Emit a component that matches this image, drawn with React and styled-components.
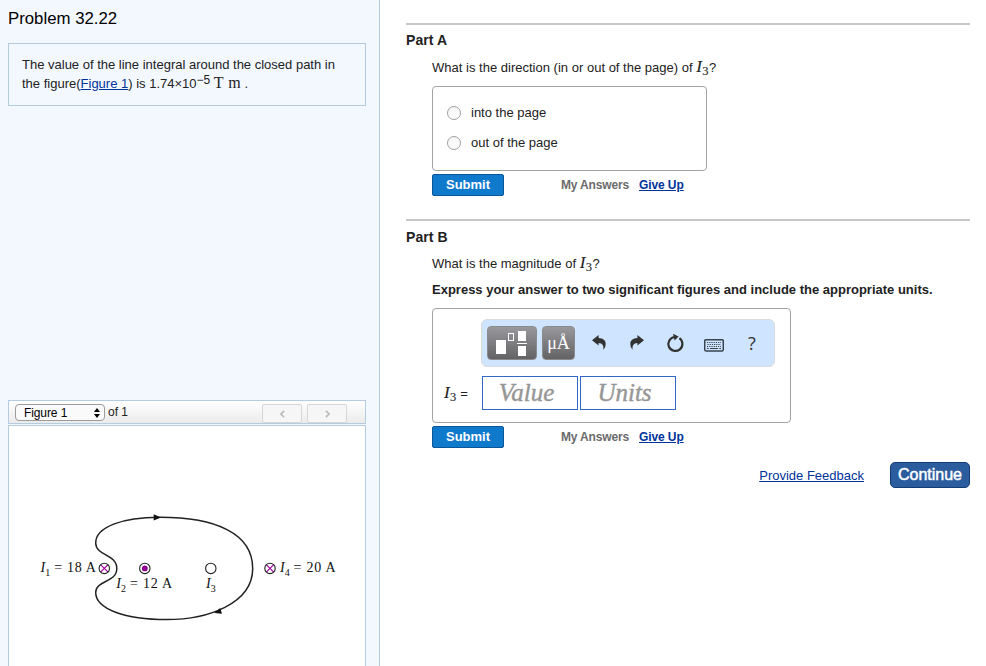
import React from "react";
import styled, { createGlobalStyle } from "styled-components";

const GlobalStyle = createGlobalStyle`
	* {
		box-sizing: border-box;
	}
	body {
		margin: 0;
		background-color: #fff;
		color: #222;
		font-family: "Liberation Sans", Arial, sans-serif;
		font-size: 13px;
	}
`;

const Container = styled.div`
	display: flex;
	height: 666px;
	overflow: hidden;
`;

const Left = styled.div`
	display: flex;
	flex-direction: column;
	flex: 0 0 380px;
	padding: 9px 13px 0 8px;
	background-color: #f3f8ff;
	border-right: 1px solid #b9cde0;
`;

const Right = styled.div`
	flex: 1;
	padding: 23px 16px 0 26px;
`;

const Title = styled.h1`
	margin: 0 0 14px;
	color: #000;
	font-size: 16.8px;
	font-weight: 400;
	line-height: 20px;
`;

const Intro = styled.div`
	height: 63px;
	padding: 11px 13px;
	border: 1px solid #b5cbdc;
	line-height: 19px;
	white-space: nowrap;
	& sup {
		font-size: 12px;
		line-height: 0;
		vertical-align: 4px;
	}
`;

const Anchor = styled.a`
	color: #039;
	text-decoration: underline;
	font-size: ${(props) => props.$size || "13px"};
	font-weight: ${(props) => (props.$bold ? 700 : 400)};
	letter-spacing: ${(props) => (props.$bold ? "-0.1px" : 0)};
`;

const Serif = styled.span`
	font-family: "Liberation Serif", "Times New Roman", serif;
	font-size: 16px;
	line-height: 0;
	letter-spacing: 0.4px;
`;

const Symbol = styled(Serif)`
	font-style: italic;
	font-size: 17px;
	-webkit-text-stroke: 0.1px #222;
	& sub {
		font-style: normal;
		font-size: 12.5px;
		line-height: 0;
		vertical-align: -3px;
	}
`;

const FigureBar = styled.div`
	display: flex;
	align-items: flex-start;
	height: 24px;
	margin-top: auto;
	padding: 2px 18px 0 6px;
	border: 1px solid #b5cbe0;
	background: linear-gradient(#fff, #ebebeb);
`;

const Picker = styled.div`
	display: flex;
	align-items: center;
	justify-content: space-between;
	width: 90px;
	height: 17px;
	margin: 1px 3px 0 0;
	padding: 0 4px 0 8px;
	border: 1px solid #9c9c9c;
	border-radius: 4px;
	background-color: #fafafa;
	color: #000;
	font-size: 12px;
	line-height: 14px;
	letter-spacing: -0.1px;
`;

const Count = styled.span`
	flex: 1;
	font-size: 12px;
	line-height: 18px;
`;

const Pager = styled.div`
	display: flex;
	align-items: center;
	justify-content: center;
	width: 40px;
	height: 19px;
	margin: 1px 0 0 5px;
	border: 1px solid #d6d6d6;
	border-radius: 2px;
	background-color: #f6f6f6;
`;

const FigureBox = styled.div`
	height: 241px;
	margin-top: 1px;
	border: 1px solid #b5cbe0;
	border-bottom: 0;
	background-color: #fff;
	& svg {
		display: block;
	}
`;

const Part = styled.section`
	height: ${(props) => props.$height};
	border-top: 2px solid #c8c8c8;
`;

const PartTitle = styled.h2`
	margin: 0;
	padding-top: ${(props) => props.$top || "6px"};
	font-size: 14px;
	font-weight: 700;
	line-height: 18px;
	letter-spacing: 0.1px;
`;

const PartBody = styled.div`
	padding-left: 26px;
`;

const Question = styled.p`
	margin: 0;
	padding-top: ${(props) => props.$top || "10px"};
	line-height: 18px;
	white-space: nowrap;
	letter-spacing: 0.01px;
`;

const Instruction = styled.p`
	margin: 0;
	padding-top: 8px;
	font-weight: 700;
	line-height: 18px;
	white-space: nowrap;
`;

const Choices = styled.div`
	width: 275px;
	height: 85px;
	margin-top: 9px;
	padding: 11px 14px;
	border: 1px solid #a3a3a3;
	border-radius: 4px;
`;

const Choice = styled.label`
	display: flex;
	align-items: center;
	height: 30px;
	line-height: 14px;
	& > span + span {
		padding-bottom: 1px;
	}
`;

const Radio = styled.span`
	width: 14px;
	height: 14px;
	margin-right: 10px;
	border: 1px solid #a0a0a0;
	border-radius: 50%;
	background: linear-gradient(#f6f6f6, #fff);
`;

const Actions = styled.div`
	display: flex;
	align-items: center;
	height: 22px;
	margin-top: 3px;
`;

const Submit = styled.button`
	width: 72px;
	height: 22px;
	margin-right: 57px;
	padding: 0 0 1px;
	border: 1px solid #0a5698;
	border-radius: 2px;
	background-color: #0f79cc;
	color: #fff;
	font: 700 13px "Liberation Sans", Arial, sans-serif;
`;

const MyAnswers = styled.span`
	width: 78px;
	color: #6b6b6b;
	font-size: 12px;
	font-weight: 700;
	letter-spacing: -0.15px;
`;

const Editor = styled.div`
	width: 359px;
	height: 115px;
	margin-top: 9px;
	padding: 10px 15px 0 11px;
	border: 1px solid #a3a3a3;
	border-radius: 4px;
`;

const Toolbar = styled.div`
	display: flex;
	align-items: center;
	width: 294px;
	height: 48px;
	margin-left: 37px;
	padding-left: 5px;
	border: 1px solid #dadada;
	border-radius: 6px;
	background-color: #cfe5ff;
`;

const Template = styled.div`
	display: flex;
	flex-shrink: 0;
	align-items: center;
	justify-content: center;
	width: ${(props) => props.$width};
	height: 34px;
	margin-right: 5px;
	border: 1px solid #8a8a8c;
	border-radius: 4px;
	background: linear-gradient(#98989d, #636365);
	color: #fff;
	font-family: "Liberation Serif", "Times New Roman", serif;
	font-size: 18px;
`;

const Tool = styled.div`
	display: flex;
	flex-shrink: 0;
	align-items: center;
	justify-content: center;
	width: 38.2px;
	height: 34px;
	padding-top: ${(props) => props.$drop || 0};
	color: #333;
	font-family: "Open Sans", sans-serif;
	font-size: 18px;
`;

const AnswerRow = styled.div`
	display: flex;
	align-items: center;
	height: 34px;
	margin-top: 9px;
`;

const AnswerLabel = styled.span`
	width: 38px;
`;

const Field = styled.div`
	width: 96px;
	height: 34px;
	margin-right: 2px;
	padding-right: 7px;
	border: 1px solid #3168c8;
	color: #969696;
	font-family: "Liberation Serif", "Times New Roman", serif;
	font-size: 25px;
	font-style: italic;
	line-height: 32px;
	text-align: center;
	-webkit-text-stroke: 0.4px #969696;
`;

const Footer = styled.div`
	display: flex;
	align-items: center;
	justify-content: flex-end;
	height: 26px;
	margin-top: 14px;
`;

const Continue = styled.button`
	width: 80px;
	height: 26px;
	margin-left: 26px;
	padding: 0 0 1px;
	border: 1px solid #123c73;
	border-radius: 5px;
	background-color: #2b5c9e;
	color: #fff;
	font: 16px "Liberation Sans", Arial, sans-serif;
	-webkit-text-stroke: 0.5px #fff;
`;

const Diagram = styled.svg`
	font-family: "Liberation Serif", "Times New Roman", serif;
	font-size: 14px;
	fill: #111;
	& .name {
		font-style: italic;
	}
	& .sub {
		font-size: 10px;
	}
`;

function Current() {
	return (
		<Symbol>
			I<sub>3</sub>
		</Symbol>
	);
}

function Chevron({ d }) {
	return (
		<svg width="7" height="8" viewBox="0 0 8 10" fill="none" stroke="#bcbcbc" strokeWidth="2.2">
			<path d={d} />
		</svg>
	);
}

function Wire({ x, into, out }) {
	return (
		<g transform={`translate(${x} 568.4)`} fill="none">
			{into && <path d="M-3.5-3.5 3.5 3.5M3.5-3.5-3.5 3.5" stroke="#a000a0" strokeWidth="1.2" />}
			{out && <circle r="2.9" fill="#90008f" />}
			<circle r="5.2" stroke="#222" strokeWidth="1.1" />
		</g>
	);
}

function Label({ x, y, index, value, width, valueX }) {
	return (
		<>
			<text x={x} y={y} className="name">I</text>
			<text x={x + 4.7} y={y + 4} className="sub">{index}</text>
			{value && (
				<text x={valueX} y={y} textLength={width}>{value}</text>
			)}
		</>
	);
}

function LoopDiagram() {
	return (
		<Diagram width="356" height="240" viewBox="9 426 356 240">
			<path
				d="M95.7 543C95.7 527 122 517.3 160 517.3C215 517.3 252.7 533 252.7 568.5C252.7 604 207 619.6 167 619.6C125 619.6 95.7 609 95.7 592.5C95.7 580 116.8 583 116.8 568.5C116.8 554 95.7 556 95.7 543Z"
				fill="none"
				stroke="#222"
				strokeWidth="1.5"
			/>
			<path d="M153.7 514.3L161 517.4L153.7 520.5Z" />
			<path d="M214.3 613L220.2 608L222 613.8Z" />
			<Wire x={104.3} into />
			<Wire x={144.8} out />
			<Wire x={210.8} />
			<Wire x={270} into />
			<Label x={40.5} y={572} index="1" value="= 18 A" valueX={54.3} width={41.5} />
			<Label x={116.3} y={588} index="2" value="= 12 A" valueX={130} width={42} />
			<Label x={206} y={588} index="3" />
			<Label x={280} y={572} index="4" value="= 20 A" valueX={293.5} width={42} />
		</Diagram>
	);
}

function FractionIcon() {
	return (
		<svg width="32" height="28" viewBox="0 0 32 28" fill="#fff">
			<rect x="0" y="11" width="10" height="14" />
			<rect x="12.5" y="4.5" width="5" height="7" fill="none" stroke="#fff" />
			<rect x="22" y="2" width="8" height="10" />
			<rect x="21" y="14" width="10" height="1" />
			<rect x="22" y="17" width="8" height="10" />
		</svg>
	);
}

function UndoIcon({ flip }) {
	return (
		<svg width="14" height="16" viewBox="0 0 14 16" fill="#333">
			<path
				d="M0 5.2L6.6 0V2.9C11 3.1 13.7 5.4 13.7 8.7C13.7 11.3 12.8 13.2 11.3 14.8C11.9 10.8 10.6 8.3 6.6 8V10.6Z"
				transform={flip ? "translate(14 0) scale(-1 1)" : undefined}
			/>
		</svg>
	);
}

function ResetIcon() {
	return (
		<svg width="18" height="20" viewBox="0 0 18 20">
			<path d="M13.4 5.2A7 7 0 1 1 8.5 4" fill="none" stroke="#333" strokeWidth="2.2" />
			<path d="M7 0.8L12.6 3.6L8.6 7.6Z" fill="#333" />
		</svg>
	);
}

function KeyboardIcon() {
	return (
		<svg width="20" height="13" viewBox="0 0 20 13" fill="none" stroke="#39434f">
			<rect x="0.7" y="0.7" width="18.6" height="11.2" rx="1.4" strokeWidth="1.5" />
			<path d="M3 3.5H17M3.5 5.5H17M3 7.5H17" strokeWidth="1" strokeDasharray="1.2 1" />
			<path d="M3 9.5H4.7M6 9.5H14M15.3 9.5H17" />
		</svg>
	);
}

function SubmitRow() {
	return (
		<Actions>
			<Submit>Submit</Submit>
			<MyAnswers>My Answers</MyAnswers>
			<Anchor $size="12px" $bold>Give Up</Anchor>
		</Actions>
	);
}

function App() {
	return (
		<>
			<GlobalStyle />
			<Container>
				<Left>
					<Title>Problem 32.22</Title>
					<Intro>
						The value of the line integral around the closed path in
						<br />
						the figure(<Anchor>Figure 1</Anchor>) is 1.74×10<sup>−5</sup> <Serif>T m</Serif> .
					</Intro>
					<FigureBar>
						<Picker>
							Figure 1
							<svg width="6" height="10" viewBox="0 0 6 10">
								<path d="M0 4L3 0L6 4ZM0 6L3 10L6 6Z" />
							</svg>
						</Picker>
						<Count>of 1</Count>
						<Pager>
							<Chevron d="M6 1L2 5L6 9" />
						</Pager>
						<Pager>
							<Chevron d="M2 1L6 5L2 9" />
						</Pager>
					</FigureBar>
					<FigureBox>
						<LoopDiagram />
					</FigureBox>
				</Left>
				<Right>
					<Part $height="196px">
						<PartTitle>Part A</PartTitle>
						<PartBody>
							<Question>
								What is the direction (in or out of the page) of <Current />?
							</Question>
							<Choices>
								<Choice>
									<Radio />
									<span>into the page</span>
								</Choice>
								<Choice>
									<Radio />
									<span>out of the page</span>
								</Choice>
							</Choices>
							<SubmitRow />
						</PartBody>
					</Part>
					<Part $height="229px">
						<PartTitle $top="7px">Part B</PartTitle>
						<PartBody>
							<Question $top="9px">
								What is the magnitude of <Current />?
							</Question>
							<Instruction>
								Express your answer to two significant figures and include the appropriate units.
							</Instruction>
							<Editor>
								<Toolbar>
									<Template $width="50px">
										<FractionIcon />
									</Template>
									<Template $width="33px">μÅ</Template>
									<Tool><UndoIcon /></Tool>
									<Tool><UndoIcon flip /></Tool>
									<Tool><ResetIcon /></Tool>
									<Tool $drop="4px"><KeyboardIcon /></Tool>
									<Tool>?</Tool>
								</Toolbar>
								<AnswerRow>
									<AnswerLabel>
										<Current /> =
									</AnswerLabel>
									<Field>Value</Field>
									<Field>Units</Field>
								</AnswerRow>
							</Editor>
							<SubmitRow />
						</PartBody>
					</Part>
					<Footer>
						<Anchor>Provide Feedback</Anchor>
						<Continue>Continue</Continue>
					</Footer>
				</Right>
			</Container>
		</>
	);
}

export default App;
